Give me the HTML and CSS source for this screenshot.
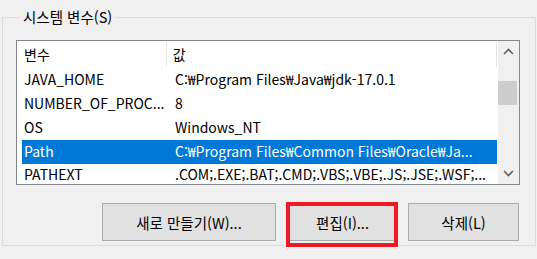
FILE: index.html
```html
<!DOCTYPE html>
<html lang="ko">

<head>
    <meta charset="UTF-8">
    <meta name="viewport" content="width=device-width, initial-scale=1.0">
    <title>시스템 변수</title>
    <link rel="stylesheet" href="styles.css">
</head>

<body>
<fieldset class="group">
    <legend>시스템 변수(S)</legend>

    <!-- Variable list -->
    <div class="listbox">
        <div class="list-view">
            <div class="list-header">
                <div class="col col-name">변수</div>
                <div class="col col-value">값</div>
            </div>
            <div class="list-body">
                <div class="row">
                    <div class="cell cell-name">JAVA_HOME</div>
                    <div class="cell cell-value">C:₩Program Files₩Java₩jdk-17.0.1</div>
                </div>
                <div class="row">
                    <div class="cell cell-name">NUMBER_OF_PROC...</div>
                    <div class="cell cell-value">8</div>
                </div>
                <div class="row">
                    <div class="cell cell-name">OS</div>
                    <div class="cell cell-value">Windows_NT</div>
                </div>
                <div class="row selected">
                    <div class="cell cell-name">Path</div>
                    <div class="cell cell-value">C:₩Program Files₩Common Files₩Oracle₩Ja...</div>
                </div>
                <div class="row last">
                    <div class="cell cell-name">PATHEXT</div>
                    <div class="cell cell-value">.COM;.EXE;.BAT;.CMD;.VBS;.VBE;.JS;.JSE;.WSF;...</div>
                </div>
            </div>
        </div>

        <div class="scrollbar">
            <div class="scroll-btn">
                <svg width="11" height="7" viewBox="0 0 11 7"><path d="M1 6 L5.5 1.5 L10 6" fill="none" stroke="#606060" stroke-width="1.6"/></svg>
            </div>
            <div class="scroll-track">
                <div class="scroll-thumb"></div>
            </div>
            <div class="scroll-btn">
                <svg width="11" height="7" viewBox="0 0 11 7"><path d="M1 1 L5.5 5.5 L10 1" fill="none" stroke="#606060" stroke-width="1.6"/></svg>
            </div>
        </div>
    </div>

    <!-- Buttons -->
    <div class="button-row">
        <button class="btn btn-new">새로 만들기(W)...</button>
        <div class="btn-wrap">
            <button class="btn btn-edit">편집(I)...</button>
            <div class="highlight-box"></div>
        </div>
        <button class="btn btn-delete">삭제(L)</button>
    </div>
</fieldset>
</body>

</html>
```

FILE: styles.css
```css
body {
    background-color: #f0f0f0;
    margin: 0;
    padding-top: 7px;
    width: 537px;
    height: 252px;
    overflow: hidden;
    font-family: "Noto Sans CJK KR", sans-serif;
    font-size: 14px;
    color: #000;
}

.group {
    margin: 0 0 0 2px;
    width: 534px;
    height: 239px;
    box-sizing: border-box;
    border: 1px solid #dcdcdc;
    padding: 13px 0 0 13px;
}

.group legend {
    margin-left: 4px;
    padding: 0 3px;
    line-height: 20px;
    font-size: 14.5px;
}

.listbox {
    display: flex;
    width: 504px;
    height: 145px;
    box-sizing: border-box;
    border: 1px solid #828790;
    background: #ffffff;
    overflow: hidden;
}

.list-view {
    width: 481px;
    overflow: hidden;
}

.list-header {
    display: flex;
    height: 27px;
    align-items: center;
}

.col {
    height: 25px;
    line-height: 25px;
    box-sizing: border-box;
    border-right: 1px solid #e5e5e5;
}

.col-name {
    width: 150px;
    padding-left: 7px;
}

.col-value {
    width: 331px;
    padding-left: 6px;
}

.list-body {
    padding-left: 5px;
}

.row {
    display: flex;
    height: 24px;
    line-height: 23px;
    width: 475px;
}

.row.last {
    height: 19px;
    line-height: 20px;
}

.row.selected {
    background-color: #0078d7;
    color: #ffffff;
}

.cell {
    white-space: nowrap;
    overflow: hidden;
}

.cell-name {
    width: 151px;
    padding-left: 2px;
    box-sizing: border-box;
}

.cell-value {
    width: 324px;
    padding-left: 2px;
    box-sizing: border-box;
}

.scrollbar {
    width: 21px;
    margin-left: 1px;
    background-color: #f0f0f0;
    display: flex;
    flex-direction: column;
}

.scroll-btn {
    height: 21px;
    display: flex;
    align-items: center;
    justify-content: center;
}

.scroll-track {
    flex: 1;
}

.scroll-thumb {
    margin-top: 19px;
    width: 19px;
    height: 24px;
    background-color: #cdcdcd;
}

.button-row {
    display: flex;
    margin-top: 18px;
    margin-left: 86px;
}

.btn {
    height: 38px;
    border: 1px solid #adadad;
    background-color: #e1e1e1;
    font-family: "Noto Sans CJK KR", sans-serif;
    font-size: 14.5px;
    color: #000;
    padding: 0;
}

.btn-new {
    width: 174px;
}

.btn-wrap {
    position: relative;
    margin-left: 13px;
}

.btn-edit {
    width: 107px;
}

.highlight-box {
    position: absolute;
    left: -3px;
    top: -1px;
    width: 112px;
    height: 45px;
    box-sizing: border-box;
    border: 4px solid #ed1c24;
}

.btn-delete {
    width: 111px;
    margin-left: 12px;
}
```
